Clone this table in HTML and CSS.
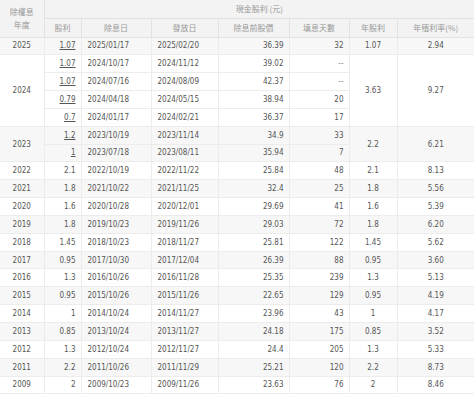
FILE: index.html
```html
<!DOCTYPE html>
<html lang="zh-TW">
<head>
  <meta charset="UTF-8" />
  <title>股利政策</title>
  <link rel="stylesheet" href="styles.css">
</head>
<body>
  <table class="div-table">
    <colgroup>
      <col class="c-year"><col class="c-div"><col class="c-exd"><col class="c-pay">
      <col class="c-price"><col class="c-days"><col class="c-ydiv"><col class="c-yield">
    </colgroup>
    <thead>
      <tr class="h1">
        <th rowspan="2" class="ylabel">除權息<br>年度</th>
        <th colspan="7">現金股利 (元)</th>
      </tr>
      <tr class="h2">
        <th>股利</th>
        <th>除息日</th>
        <th>發放日</th>
        <th>除息前股價</th>
        <th>填息天數</th>
        <th>年股利</th>
        <th>年殖利率(%)</th>
      </tr>
    </thead>
    <tbody>
      <tr class="odd">
        <td class="yr">2025</td><td class="r"><a href="#">1.07</a></td><td>2025/01/17</td><td>2025/02/20</td>
        <td class="r">36.39</td><td class="r">32</td><td class="c">1.07</td><td class="c">2.94</td>
      </tr>
      <tr>
        <td class="yr" rowspan="4">2024</td><td class="r"><a href="#">1.07</a></td><td>2024/10/17</td><td>2024/11/12</td>
        <td class="r">39.02</td><td class="r dash">--</td><td class="c" rowspan="4">3.63</td><td class="c" rowspan="4">9.27</td>
      </tr>
      <tr>
        <td class="r"><a href="#">1.07</a></td><td>2024/07/16</td><td>2024/08/09</td>
        <td class="r">42.37</td><td class="r dash">--</td>
      </tr>
      <tr>
        <td class="r"><a href="#">0.79</a></td><td>2024/04/18</td><td>2024/05/15</td>
        <td class="r">38.94</td><td class="r">20</td>
      </tr>
      <tr>
        <td class="r"><a href="#">0.7</a></td><td>2024/01/17</td><td>2024/02/21</td>
        <td class="r">36.37</td><td class="r">17</td>
      </tr>
      <tr class="odd">
        <td class="yr" rowspan="2">2023</td><td class="r"><a href="#">1.2</a></td><td>2023/10/19</td><td>2023/11/14</td>
        <td class="r">34.9</td><td class="r">33</td><td class="c" rowspan="2">2.2</td><td class="c" rowspan="2">6.21</td>
      </tr>
      <tr class="odd">
        <td class="r"><a href="#">1</a></td><td>2023/07/18</td><td>2023/08/11</td>
        <td class="r">35.94</td><td class="r">7</td>
      </tr>
      <tr><td class="yr">2022</td><td class="r">2.1</td><td>2022/10/19</td><td>2022/11/22</td><td class="r">25.84</td><td class="r">48</td><td class="c">2.1</td><td class="c">8.13</td></tr>
      <tr class="odd"><td class="yr">2021</td><td class="r">1.8</td><td>2021/10/22</td><td>2021/11/25</td><td class="r">32.4</td><td class="r">25</td><td class="c">1.8</td><td class="c">5.56</td></tr>
      <tr><td class="yr">2020</td><td class="r">1.6</td><td>2020/10/28</td><td>2020/12/01</td><td class="r">29.69</td><td class="r">41</td><td class="c">1.6</td><td class="c">5.39</td></tr>
      <tr class="odd"><td class="yr">2019</td><td class="r">1.8</td><td>2019/10/23</td><td>2019/11/26</td><td class="r">29.03</td><td class="r">72</td><td class="c">1.8</td><td class="c">6.20</td></tr>
      <tr><td class="yr">2018</td><td class="r">1.45</td><td>2018/10/23</td><td>2018/11/27</td><td class="r">25.81</td><td class="r">122</td><td class="c">1.45</td><td class="c">5.62</td></tr>
      <tr class="odd"><td class="yr">2017</td><td class="r">0.95</td><td>2017/10/30</td><td>2017/12/04</td><td class="r">26.39</td><td class="r">88</td><td class="c">0.95</td><td class="c">3.60</td></tr>
      <tr><td class="yr">2016</td><td class="r">1.3</td><td>2016/10/26</td><td>2016/11/28</td><td class="r">25.35</td><td class="r">239</td><td class="c">1.3</td><td class="c">5.13</td></tr>
      <tr class="odd"><td class="yr">2015</td><td class="r">0.95</td><td>2015/10/26</td><td>2015/11/26</td><td class="r">22.65</td><td class="r">129</td><td class="c">0.95</td><td class="c">4.19</td></tr>
      <tr><td class="yr">2014</td><td class="r">1</td><td>2014/10/24</td><td>2014/11/27</td><td class="r">23.96</td><td class="r">43</td><td class="c">1</td><td class="c">4.17</td></tr>
      <tr class="odd"><td class="yr">2013</td><td class="r">0.85</td><td>2013/10/24</td><td>2013/11/27</td><td class="r">24.18</td><td class="r">175</td><td class="c">0.85</td><td class="c">3.52</td></tr>
      <tr><td class="yr">2012</td><td class="r">1.3</td><td>2012/10/24</td><td>2012/11/27</td><td class="r">24.4</td><td class="r">205</td><td class="c">1.3</td><td class="c">5.33</td></tr>
      <tr class="odd"><td class="yr">2011</td><td class="r">2.2</td><td>2011/10/26</td><td>2011/11/29</td><td class="r">25.21</td><td class="r">120</td><td class="c">2.2</td><td class="c">8.73</td></tr>
      <tr><td class="yr">2009</td><td class="r">2</td><td>2009/10/23</td><td>2009/11/26</td><td class="r">23.63</td><td class="r">76</td><td class="c">2</td><td class="c">8.46</td></tr>
    </tbody>
  </table>
</body>
</html>
```

FILE: styles.css
```css
*, *::before, *::after {
  box-sizing: border-box;
}
html, body {
  margin: 0;
  padding: 0;
  background: #ffffff;
}
.div-table {
  width: 474px;
  border-collapse: collapse;
  table-layout: fixed;
  font-family: "DejaVu Sans Condensed", "DejaVu Sans", "Noto Sans CJK TC", sans-serif;
  font-stretch: condensed;
  font-size: 8px;
  color: #555555;
}
.c-year { width: 44px; }
.c-div { width: 37px; }
.c-exd { width: 70px; }
.c-pay { width: 67px; }
.c-price { width: 71px; }
.c-days { width: 60px; }
.c-ydiv { width: 48px; }
.c-yield { width: 77px; }

.div-table th {
  background: #f3f3f3;
  font-family: "Noto Sans CJK TC", sans-serif;
  font-weight: normal;
  color: #999999;
  font-size: 8px;
  text-align: center;
  vertical-align: middle;
  padding: 0;
  border: 1px solid #e2e2e2;
  border-top: none;
}
.div-table th:first-child { border-left: none; }
.div-table th:last-child { border-right: none; }
.h1 th { height: 18px; }
.h2 th { height: 19px; }
.div-table th.ylabel {
  line-height: 13px;
  border-bottom: 1px solid #e2e2e2;
}

.div-table td {
  height: 17.85px;
  padding: 0 5px 0 6px;
  border: 1px solid #ececec;
  vertical-align: middle;
  white-space: nowrap;
  text-align: left;
}
.div-table td:first-child { border-left: none; }
.div-table tr td:last-child { border-right: none; }
.div-table tr.odd td { background: #f7f7f7; }
.div-table td.yr { text-align: center; padding: 0; }
.div-table td.r { text-align: right; }
.div-table td.c { text-align: center; padding: 0; }
.div-table td.dash { color: #888888; }
.div-table a {
  color: #555555;
  text-decoration: underline;
  text-underline-offset: 1px;
}
```
